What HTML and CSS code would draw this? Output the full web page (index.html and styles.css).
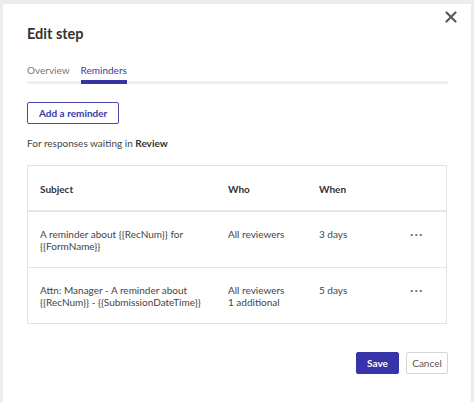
FILE: index.html
```html
<!DOCTYPE html>
<html>
<head>
<meta charset="utf-8">
<link rel="stylesheet" href="styles.css">
</head>
<body>
<div class="dialog">
  <button class="close" aria-label="Close">
    <svg width="12" height="12" viewBox="0 0 12 12"><path d="M1.5 1.5L10.5 10.5M10.5 1.5L1.5 10.5" stroke="#5a5a5a" stroke-width="2.2" stroke-linecap="round"/></svg>
  </button>
  <h1 class="title">Edit step</h1>
  <div class="tabs">
    <div class="tab">Overview</div>
    <div class="tab active">Reminders</div>
  </div>
  <button class="btn-outline">Add a reminder</button>
  <p class="note">For responses waiting in <b>Review</b></p>
  <div class="table">
    <div class="row head">
      <div>Subject</div><div>Who</div><div>When</div><div></div>
    </div>
    <div class="row">
      <div>A reminder about {{RecNum}} for {{FormName}}</div>
      <div>All reviewers</div>
      <div>3 days</div>
      <div class="dots">•••</div>
    </div>
    <div class="row">
      <div>Attn: Manager - A reminder about {{RecNum}} - {{SubmissionDateTime}}</div>
      <div>All reviewers<br>1 additional</div>
      <div>5 days</div>
      <div class="dots">•••</div>
    </div>
  </div>
  <div class="actions">
    <button class="btn-primary">Save</button>
    <button class="btn-secondary">Cancel</button>
  </div>
</div>
</body>
</html>
```
FILE: styles.css
```css
html, body { margin: 0; padding: 0; }
body {
  background: #ececec;
  font-family: "Lato", "Noto Sans", sans-serif;
  color: #333;
  height: 402px;
  overflow: hidden;
}
.dialog {
  position: relative;
  background: #fff;
  margin: 4px 3px 0 3px;
  height: 398px;
  padding: 0 24px;
  box-sizing: border-box;
}
.close {
  position: absolute;
  right: 14px;
  top: 7px;
  border: 0;
  background: none;
  padding: 0;
  width: 12px;
  height: 12px;
}
.close svg { display: block; }
.title {
  margin: 0;
  padding-top: 20px;
  font-size: 14.5px;
  font-weight: 700;
  line-height: 20px;
  color: #333;
}
.tabs {
  display: flex;
  gap: 11px;
  margin-top: 20px;
  border-bottom: 3px solid #f0f0f0;
  width: 421px;
}
.tab {
  font-size: 10px;
  line-height: 12px;
  padding-bottom: 5px;
  color: #777;
  position: relative;
}
.tab.active { color: #3b38a6; }
.tab.active::after {
  content: "";
  position: absolute;
  left: 0; right: 0;
  bottom: -3px;
  height: 4px;
  background: #3733a3;
}
.btn-outline {
  display: block;
  margin-top: 18px;
  height: 22px;
  padding: 0 11px;
  border: 1px solid #4a47ad;
  border-radius: 2px;
  background: #fff;
  color: #3b38a6;
  font-family: inherit;
  font-size: 10px;
  font-weight: 700;
}
.note {
  margin: 13px 0 0;
  font-size: 10px;
  line-height: 12px;
  color: #444;
}
.note b { color: #333; }
.table {
  margin-top: 16px;
  width: 420px;
  border: 1px solid #e2e2e2;
  box-sizing: border-box;
}
.row {
  display: grid;
  grid-template-columns: 188px 91px 91px 1fr;
  height: 56px;
  border-top: 1px solid #e6e6e6;
  font-size: 10px;
  line-height: 12px;
  color: #444;
  box-sizing: border-box;
}
.row > div { padding: 16px 0 0 12px; }
.row.head {
  border-top: 0;
  height: 45px;
  border-bottom: 1px solid #e6e6e6;
  font-weight: 700;
  color: #333;
}
.row.head > div { padding-top: 17px; }
.dots {
  font-size: 6px;
  letter-spacing: 1px;
  color: #777;
  padding-top: 17px !important;
}
.actions {
  display: flex;
  justify-content: flex-end;
  gap: 7px;
  margin-top: 28px;
  width: 421px;
}
.btn-primary, .btn-secondary {
  height: 22px;
  font-family: inherit;
  font-size: 10px;
  border-radius: 2px;
  padding: 0;
}
.btn-primary {
  background: #3733a8;
  color: #fff;
  border: 1px solid #3733a8;
  font-weight: 700;
  width: 43px;
}
.btn-secondary {
  background: #fff;
  color: #555;
  border: 1px solid #d6d6d6;
  width: 42px;
}
```
